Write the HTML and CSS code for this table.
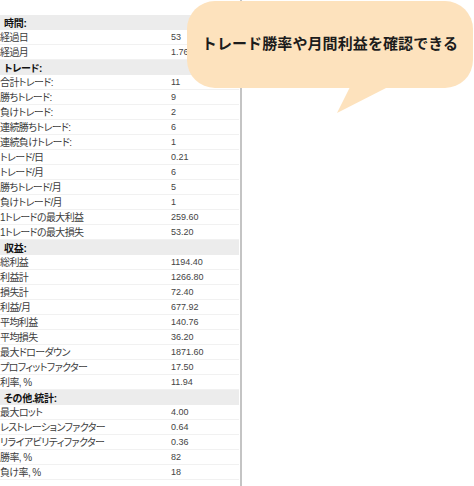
FILE: index.html
```html
<!DOCTYPE html>
<html lang="ja">
<head>
<meta charset="utf-8">
<link rel="stylesheet" href="styles.css">
</head>
<body>
<div class="page">
  <div class="panel">
    <div class="row head"><span>時間:</span></div>
    <div class="row"><span class="lbl">経過日</span><span class="val">53</span></div>
    <div class="row"><span class="lbl">経過月</span><span class="val">1.76</span></div>
    <div class="row head"><span>トレード:</span></div>
    <div class="row"><span class="lbl">合計トレード:</span><span class="val">11</span></div>
    <div class="row"><span class="lbl">勝ちトレード:</span><span class="val">9</span></div>
    <div class="row"><span class="lbl">負けトレード:</span><span class="val">2</span></div>
    <div class="row"><span class="lbl">連続勝ちトレード:</span><span class="val">6</span></div>
    <div class="row"><span class="lbl">連続負けトレード:</span><span class="val">1</span></div>
    <div class="row"><span class="lbl">トレード/日</span><span class="val">0.21</span></div>
    <div class="row"><span class="lbl">トレード/月</span><span class="val">6</span></div>
    <div class="row"><span class="lbl">勝ちトレード/月</span><span class="val">5</span></div>
    <div class="row"><span class="lbl">負けトレード/月</span><span class="val">1</span></div>
    <div class="row"><span class="lbl">1トレードの最大利益</span><span class="val">259.60</span></div>
    <div class="row"><span class="lbl">1トレードの最大損失</span><span class="val">53.20</span></div>
    <div class="row head"><span>収益:</span></div>
    <div class="row"><span class="lbl">総利益</span><span class="val">1194.40</span></div>
    <div class="row"><span class="lbl">利益計</span><span class="val">1266.80</span></div>
    <div class="row"><span class="lbl">損失計</span><span class="val">72.40</span></div>
    <div class="row"><span class="lbl">利益/月</span><span class="val">677.92</span></div>
    <div class="row"><span class="lbl">平均利益</span><span class="val">140.76</span></div>
    <div class="row"><span class="lbl">平均損失</span><span class="val">36.20</span></div>
    <div class="row"><span class="lbl">最大ドローダウン</span><span class="val">1871.60</span></div>
    <div class="row"><span class="lbl">プロフィットファクター</span><span class="val">17.50</span></div>
    <div class="row"><span class="lbl">利率, %</span><span class="val">11.94</span></div>
    <div class="row head"><span>その他.統計:</span></div>
    <div class="row"><span class="lbl">最大ロット</span><span class="val">4.00</span></div>
    <div class="row"><span class="lbl">レストレーションファクター</span><span class="val">0.64</span></div>
    <div class="row"><span class="lbl">リライアビリティファクター</span><span class="val">0.36</span></div>
    <div class="row"><span class="lbl">勝率, %</span><span class="val">82</span></div>
    <div class="row"><span class="lbl">負け率, %</span><span class="val">18</span></div>
  </div>
  <div class="bubble">
    <p class="bubble-text">トレード勝率や月間利益を確認できる</p>
    <svg class="tail" width="60" height="30" viewBox="0 0 60 30"><polygon points="13,0 51,0 0,26" fill="#fde2bd"/></svg>
  </div>
</div>
</body>
</html>
```

FILE: styles.css
```css
html, body {
  margin: 0;
  padding: 0;
  background: #ffffff;
}
.page {
  position: relative;
  width: 474px;
  height: 486px;
  overflow: hidden;
  font-family: "Liberation Sans", "Noto Sans CJK JP", sans-serif;
}
.panel {
  width: 242px;
  height: 486px;
  padding-top: 15px;
  box-sizing: border-box;
  border-right: 2px solid #c4c4c4;
  overflow: hidden;
}
.row {
  display: grid;
  grid-template-columns: 171px 1fr;
  height: 15px;
  align-items: center;
  margin-right: 1px;
  border-bottom: 1px solid #f1f1f1;
  box-sizing: border-box;
}
.row.head {
  background: #ececec;
  border-bottom: none;
  font-weight: bold;
  font-size: 10px;
  color: #111;
  padding-left: 4px;
  grid-template-columns: 1fr;
  font-feature-settings: "palt" 1;
  letter-spacing: -0.3px;
}
.lbl {
  font-size: 10px;
  color: #3c3c3c;
  font-feature-settings: "palt" 1;
  letter-spacing: -0.6px;
  white-space: nowrap;
  line-height: 15px;
}
.val {
  font-size: 9px;
  color: #444;
  line-height: 15px;
}
.bubble {
  position: absolute;
  left: 187px;
  top: 1px;
  width: 286px;
  height: 87px;
  border-radius: 28px;
  background: #fde2bd;
  display: flex;
  align-items: center;
  justify-content: center;
}
.bubble-text {
  margin: 0 0 5px 0;
  font-family: "Noto Sans CJK JP", sans-serif;
  font-weight: bold;
  font-size: 15px;
  color: #1c1c1c;
  letter-spacing: 0.1px;
}
.tail {
  position: absolute;
  left: 150px;
  top: 86px;
}
```
